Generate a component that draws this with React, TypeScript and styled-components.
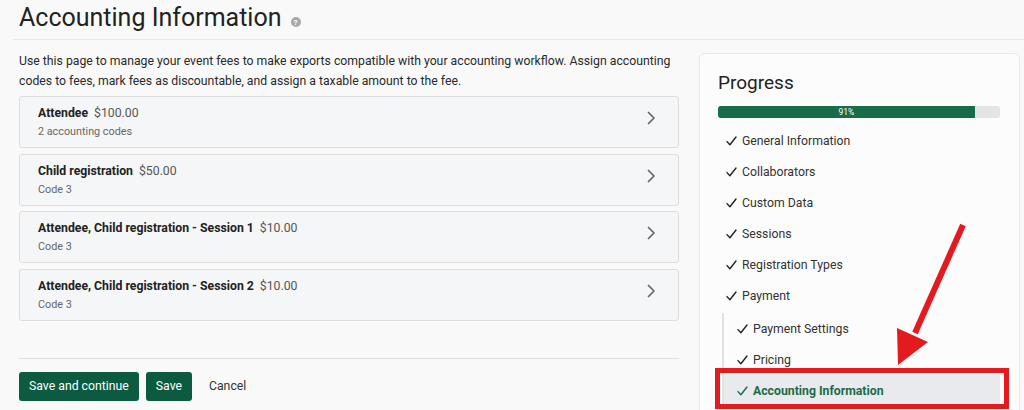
import React from "react";
import styled, { createGlobalStyle } from "styled-components";

const GlobalStyle = createGlobalStyle`
  html, body { margin: 0; padding: 0; background: #f9f9f9; }
  body { font-family: Roboto, "Liberation Sans", Arial, sans-serif; color: #2b2b2b; }
  * { box-sizing: border-box; }
`;

const Page = styled.div`
  width: 1024px;
  height: 410px;
  overflow: hidden;
  position: relative;
`;

const Header = styled.div`
  margin-left: 13px;
  padding-left: 6px;
  height: 40px;
  border-bottom: 1px solid #e8e8e8;
  display: flex;
  align-items: flex-start;
`;

const Title = styled.h1`
  margin: 0;
  padding-top: 3px;
  font-size: 25px;
  font-weight: 400;
  line-height: 30px;
  color: #222;
`;

const Help = styled.span`
  display: inline-flex;
  align-items: center;
  justify-content: center;
  width: 10px;
  height: 10px;
  border-radius: 50%;
  background: #a8a8a8;
  color: #fff;
  font-size: 8px;
  font-weight: 700;
  margin: 17px 0 0 9px;
`;

const Body = styled.div`
  display: flex;
  gap: 20px;
  padding-left: 19px;
`;

const Main = styled.div`
  width: 660px;
  display: flex;
  flex-direction: column;
`;

const Intro = styled.p`
  margin: 12px 0 5px;
  font-size: 12.25px;
  line-height: 19.5px;
  color: #2a2a2a;
`;

const FeeList = styled.div`
  display: flex;
  flex-direction: column;
  gap: 5.67px;
`;

const FeeCard = styled.div`
  height: 52px;
  background: #f5f6f7;
  border: 1px solid #dddddd;
  border-radius: 3px;
  display: flex;
  align-items: flex-start;
  padding: 8px 22px 0 18px;
`;

const FeeText = styled.div`
  flex: 1;
  display: flex;
  flex-direction: column;
  gap: 4px;
`;

const FeeTitle = styled.div`
  font-size: 12.25px;
  line-height: 16px;
  color: #222;
  font-weight: 700;
`;

const Price = styled.span`
  font-weight: 400;
  color: #555;
  margin-left: 6px;
`;

const FeeSub = styled.div`
  font-size: 10.8px;
  line-height: 14px;
  color: #666;
`;

const ChevronBox = styled.span`
  display: flex;
  margin-top: 6px;
`;

const Divider = styled.div`
  margin-top: 37px;
  border-top: 1px solid #e0e0e0;
`;

const Actions = styled.div`
  display: flex;
  align-items: center;
  gap: 7px;
  margin-top: 13px;
`;

const Button = styled.button<{ $primary?: boolean }>`
  height: 29px;
  padding: 0 10px;
  border-radius: 3px;
  font-family: inherit;
  font-size: 12.25px;
  border: none;
  cursor: pointer;
  background: ${(p) => (p.$primary ? "#0c5a40" : "transparent")};
  color: ${(p) => (p.$primary ? "#fff" : "#333")};
`;

const Panel = styled.aside`
  margin-top: 13px;
  width: 321px;
  height: 380px;
  background: #fcfcfc;
  border: 1px solid #e9e9e9;
  border-radius: 6px;
  padding: 17px 19px 0 18px;
`;

const PanelTitle = styled.h2`
  margin: 0;
  font-size: 19px;
  font-weight: 400;
  line-height: 24px;
  color: #222;
`;

const Bar = styled.div`
  margin-top: 11px;
  height: 12px;
  border-radius: 3px;
  background: #e4e4e4;
  overflow: hidden;
`;

const Fill = styled.div`
  height: 100%;
  background: #186c49;
  color: #fff;
  font-size: 8.5px;
  line-height: 12px;
  text-align: center;
`;

const Steps = styled.ul`
  list-style: none;
  margin: 7px 0 0;
  padding: 0;
  display: flex;
  flex-direction: column;
`;

const Step = styled.li<{ $active?: boolean }>`
  height: 31px;
  display: flex;
  align-items: center;
  gap: 5px;
  padding-left: 8px;
  font-size: 12.25px;
  color: ${(p) => (p.$active ? "#1b6b47" : "#333")};
  font-weight: ${(p) => (p.$active ? 700 : 400)};
  background: ${(p) => (p.$active ? "#e9eaee" : "transparent")};
`;

const SubSteps = styled.ul`
  list-style: none;
  margin: 2px 0 0 4px;
  padding: 0;
  border-left: 2px solid #e2e2e2;
  display: flex;
  flex-direction: column;
`;

const SubStep = styled(Step)`
  padding-left: 13px;
`;

const Highlight = styled.div`
  position: absolute;
  left: 715px;
  top: 368px;
  width: 294px;
  height: 41px;
  border: 5px solid #e31b1f;
`;

const Arrow = styled.svg`
  position: absolute;
  left: 0;
  top: 0;
  pointer-events: none;
`;

const fees = [
  { name: "Attendee", price: "$100.00", sub: "2 accounting codes" },
  { name: "Child registration", price: "$50.00", sub: "Code 3" },
  { name: "Attendee, Child registration - Session 1", price: "$10.00", sub: "Code 3" },
  { name: "Attendee, Child registration - Session 2", price: "$10.00", sub: "Code 3" },
];

const steps = [
  "General Information",
  "Collaborators",
  "Custom Data",
  "Sessions",
  "Registration Types",
  "Payment",
];

const Chevron = () => (
  <svg width="10" height="14" viewBox="0 0 10 14" fill="none">
    <path d="M2.5 1.5l5.5 5.5-5.5 5.5" stroke="#666" strokeWidth="1.7" strokeLinecap="round" strokeLinejoin="round" />
  </svg>
);

const Check = ({ color = "#222" }: { color?: string }) => (
  <svg width="11" height="10" viewBox="0 0 11 10" fill="none">
    <path d="M1 5.6L3.9 8.8L10 1" stroke={color} strokeWidth="1.4" strokeLinecap="round" strokeLinejoin="round" />
  </svg>
);

export default function App() {
  return (
    <Page>
      <GlobalStyle />
      <Header>
        <Title>Accounting Information</Title>
        <Help>?</Help>
      </Header>
      <Body>
        <Main>
          <Intro>
            Use this page to manage your event fees to make exports compatible with your accounting workflow. Assign
            accounting codes to fees, mark fees as discountable, and assign a taxable amount to the fee.
          </Intro>
          <FeeList>
            {fees.map((f) => (
              <FeeCard key={f.name}>
                <FeeText>
                  <FeeTitle>
                    {f.name}
                    <Price>{f.price}</Price>
                  </FeeTitle>
                  <FeeSub>{f.sub}</FeeSub>
                </FeeText>
                <ChevronBox>
                  <Chevron />
                </ChevronBox>
              </FeeCard>
            ))}
          </FeeList>
          <Divider />
          <Actions>
            <Button $primary>Save and continue</Button>
            <Button $primary>Save</Button>
            <Button>Cancel</Button>
          </Actions>
        </Main>
        <Panel>
          <PanelTitle>Progress</PanelTitle>
          <Bar>
            <Fill style={{ width: "91%" }}>91%</Fill>
          </Bar>
          <Steps>
            {steps.map((s) => (
              <Step key={s}>
                <Check />
                {s}
              </Step>
            ))}
          </Steps>
          <SubSteps>
            <SubStep>
              <Check />
              Payment Settings
            </SubStep>
            <SubStep>
              <Check />
              Pricing
            </SubStep>
            <SubStep $active>
              <Check color="#1b6b47" />
              Accounting Information
            </SubStep>
          </SubSteps>
        </Panel>
      </Body>
      <Highlight />
      <Arrow width="1024" height="410" viewBox="0 0 1024 410">
        <line x1="963" y1="225" x2="915" y2="333" stroke="#e31b1f" strokeWidth="6" />
        <polygon points="897,328 928,342 898,365" fill="#e31b1f" />
      </Arrow>
    </Page>
  );
}
